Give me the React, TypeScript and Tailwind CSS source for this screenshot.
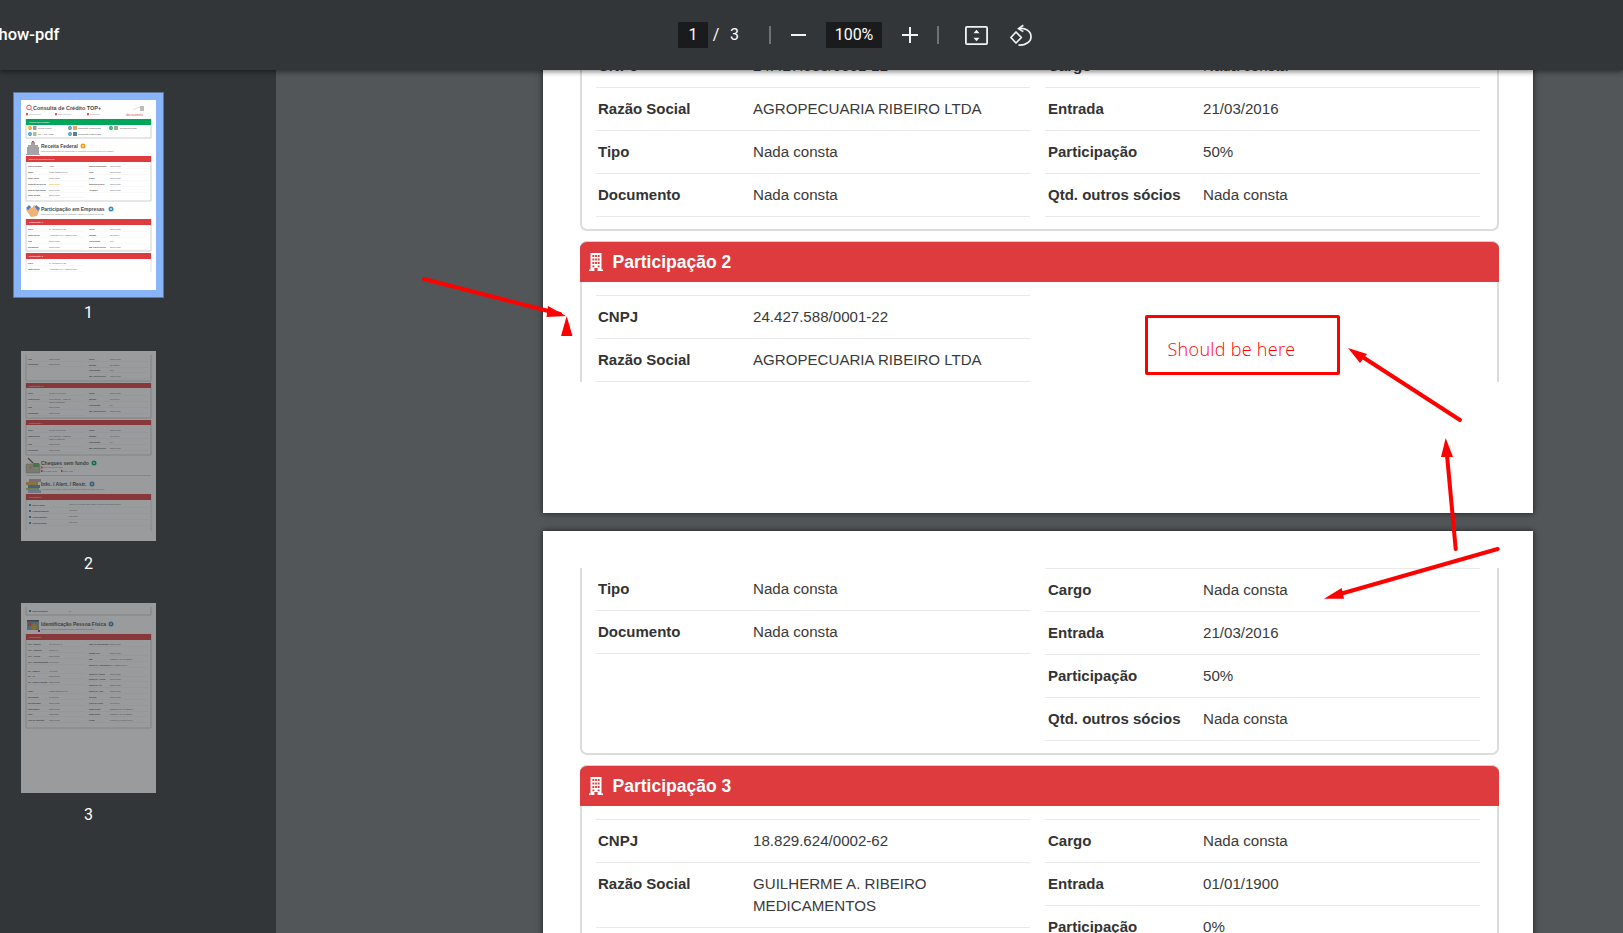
import React from "react";

const LABEL = "#444";
function T({ x, y, s = 2, c = "#555", b = false, children }: { x: number; y: number; s?: number; c?: string; b?: boolean; children: React.ReactNode }) {
  return (
    <text x={x} y={y} fontSize={s} fill={c} fontWeight={b ? 700 : 400} fontFamily="'Liberation Sans', sans-serif">
      {children}
    </text>
  );
}
function Dot({ x, y, c, r = 1.9 }: { x: number; y: number; c: string; r?: number }) {
  return (
    <g>
      <circle cx={x} cy={y} r={r} fill={c} />
      <circle cx={x} cy={y} r={r * 0.4} fill="#fff" opacity={0.75} />
    </g>
  );
}
function RedBar({ y, t, h = 6 }: { y: number; t: string; h?: number }) {
  return (
    <g>
      <rect x={5} y={y} width={125} height={h} fill="#dd3b3e" />
      <T x={8} y={y + 4} s={2.2} c="#fff">{t}</T>
    </g>
  );
}
function Frame({ y1, y2, open = false }: { y1: number; y2: number; open?: boolean }) {
  return open ? (
    <path d={`M5 ${y1}V${y2}M130 ${y1}V${y2}`} stroke="#ccc" strokeWidth={0.6} fill="none" />
  ) : (
    <path d={`M5 ${y1}V${y2}H130V${y1}`} stroke="#c8c8c8" strokeWidth={0.9} fill="none" />
  );
}
function Cell({ side, y, l, v, vc }: { side: "l" | "r"; y: number; l: string; v: string; vc?: string }) {
  const lx = side === "l" ? 7 : 68;
  const vx = side === "l" ? 28 : 89;
  const w = side === "l" ? 58 : 60;
  return (
    <g>
      <T x={lx} y={y + 0.7} s={1.9} c={LABEL} b>{l}</T>
      <T x={vx} y={y + 0.7} s={1.9} c={vc ?? "#666"}>{v}</T>
      <rect x={lx - 1} y={y + 2.4} width={w} height={0.3} fill="#e6e6e6" />
    </g>
  );
}
function Heading({ y, t, sub, dx, c, s = 5 }: { y: number; t: string; sub: string; dx: number; c: string; s?: number }) {
  return (
    <g>
      <T x={20} y={y + 1.8} s={s} c="#4a4a4a" b>{t}</T>
      <Dot x={dx} y={y} c={c} r={2.5} />
      <T x={20} y={y + 6} s={1.9} c="#777">{sub}</T>
    </g>
  );
}
const N = "Nada consta";

function Thumb1() {
  return (
    <svg viewBox="0 0 135 190" className="w-[135px] h-[190px] block">
      <circle cx={8} cy={7.5} r={2.3} fill="none" stroke="#e8574e" strokeWidth={1} />
      <path d="M9.8 9.3L11.5 11" stroke="#e8574e" strokeWidth={1} />
      <T x={12} y={9.8} s={5.5} c="#4a4a4a" b>Consulta de Crédito TOP+</T>
      <path d="M112 10l6-3 3 1" stroke="#e6a0a0" strokeWidth={0.5} fill="none" />
      <rect x={119} y={6} width={4} height={5} fill="#bbb" />
      <T x={105} y={15.6} s={3.2} c="#e04a50">docscamelo</T>
      <rect x={5} y={13} width={2} height={2.4} fill="#e8574e" />
      <T x={8} y={15} s={1.7} c="#888">000.000.000-00</T>
      <rect x={34} y={13} width={2} height={2.4} fill="#e8574e" />
      <T x={37} y={15} s={1.7} c="#888">Data: 00/00/0000</T>
      <rect x={66} y={13} width={2} height={2.4} fill="#e8574e" />
      <T x={69} y={15} s={1.7} c="#888">ID 00000000</T>

      <Frame y1={19} y2={38} />
      <rect x={5} y={19} width={125} height={6} fill="#00a65a" />
      <T x={8} y={23} s={2} c="#fff">Resumo das consultas</T>
      <Dot x={9} y={28} c="#f39c12" />
      <rect x={12} y={26} width={3.5} height={4} fill="#999" />
      <T x={17} y={28.7} s={1.9} c={LABEL}>Receita Federal</T>
      <Dot x={49} y={28} c="#3c8dbc" />
      <rect x={52} y={26} width={4} height={4} fill="#e9a36b" />
      <T x={57} y={28.7} s={1.9} c={LABEL}>Participação em Empresas</T>
      <Dot x={90} y={28} c="#00a65a" />
      <rect x={93} y={26} width={4} height={4} fill="#a8a890" />
      <T x={99} y={28.7} s={1.9} c={LABEL}>Cheques sem fundo</T>
      <Dot x={9} y={34} c="#3c8dbc" />
      <rect x={12} y={32} width={3.5} height={4} fill="#a9c48a" />
      <T x={17} y={34.7} s={1.9} c={LABEL}>Info. / Alert. / Restr.</T>
      <Dot x={49} y={34} c="#3c8dbc" />
      <rect x={52} y={32} width={4} height={4} fill="#5d7f94" />
      <T x={57} y={34.7} s={1.9} c={LABEL}>Identificação Pessoa Física</T>

      <path d="M5 54h14v1H5zM6 47h12v7H6zM7 45h10v2H7zM10 42h4v3h-4z" fill="#a3a3a8" />
      <rect x={11} y={41} width={2} height={1.5} fill="#d9534f" />
      <Heading y={46} t="Receita Federal" sub="Saiba mais informações do nome/destino e a situação dele/dela segundo seu cadastro" dx={62} c="#f39c12" />

      <Frame y1={56} y2={101} />
      <RedBar y={56} t="Dados da Receita Federal" />
      <Cell side="l" y={66} l="Tipo de pessoa" v="FÍSICA" />
      <Cell side="l" y={72} l="Nome" v="ROSE RIBEIRO DIAS" />
      <Cell side="l" y={78} l="Nome social" v={N} />
      <Cell side="l" y={84} l="Situação na Receita" v={N} vc="#f39c12" />
      <Cell side="l" y={90} l="Data de nascimento" v={N} />
      <Cell side="l" y={95} l="Nome da mãe" v={N} />
      <Cell side="r" y={66} l="Data de atualização" v={N} />
      <Cell side="r" y={72} l="Sexo" v={N} />
      <Cell side="r" y={78} l="E-mail" v={N} />
      <Cell side="r" y={84} l="Natureza jurídica" v={N} />
      <Cell side="r" y={90} l="Atividade" v={N} />

      <path d="M5 110l4-4 2 2 2-3 6 4-3 7-6 1z" fill="#eeb27a" />
      <path d="M5 108l3-3 2 2-3 3zM15 105l4 3-2 3-3-4z" fill="#4a80c0" />
      <Heading y={109} t="Participação em Empresas" sub="Seus parceiros, participação de empresas, obtidos no Ministério do Crédito" dx={90} c="#3c8dbc" />

      <Frame y1={119} y2={151} />
      <RedBar y={119} t="Participação 1" />
      <Cell side="l" y={129} l="CNPJ" v="24.427.588/0001-22" />
      <Cell side="l" y={135} l="Razão Social" v="AGROPECUARIA RIBEIRO LTDA" />
      <Cell side="l" y={141} l="Tipo" v={N} />
      <Cell side="l" y={147} l="Documento" v={N} />
      <Cell side="r" y={129} l="Cargo" v={N} />
      <Cell side="r" y={135} l="Entrada" v="21/03/2016" />
      <Cell side="r" y={141} l="Participação" v="50%" />
      <Cell side="r" y={147} l="Qtd. outros sócios" v={N} />

      <Frame y1={153} y2={172} open />
      <RedBar y={153} t="Participação 2" />
      <Cell side="l" y={163} l="CNPJ" v="24.427.588/0001-22" />
      <Cell side="l" y={169} l="Razão Social" v="AGROPECUARIA RIBEIRO LTDA" />
    </svg>
  );
}

function Thumb2() {
  return (
    <svg viewBox="0 0 135 190" className="w-[135px] h-[190px] block">
      <Frame y1={4} y2={30} />
      <Cell side="l" y={8} l="Tipo" v={N} />
      <Cell side="l" y={13} l="Documento" v={N} />
      <Cell side="r" y={8} l="Cargo" v={N} />
      <Cell side="r" y={14} l="Entrada" v="21/03/2016" />
      <Cell side="r" y={19} l="Participação" v="50%" />
      <Cell side="r" y={25} l="Qtd. outros sócios" v={N} />

      <Frame y1={32} y2={67} />
      <RedBar y={32} t="Participação 3" h={5} />
      <Cell side="l" y={42} l="CNPJ" v="18.829.624/0002-62" />
      <Cell side="l" y={48} l="Razão Social" v="GUILHERME A. RIBEIRO" />
      <T x={28} y={51.7} s={1.9} c="#666">MEDICAMENTOS</T>
      <Cell side="l" y={56} l="Tipo" v={N} />
      <Cell side="l" y={62} l="Documento" v={N} />
      <Cell side="r" y={42} l="Cargo" v={N} />
      <Cell side="r" y={48} l="Entrada" v="01/01/1900" />
      <Cell side="r" y={54} l="Participação" v="0%" />
      <Cell side="r" y={60} l="Qtd. outros sócios" v={N} />

      <Frame y1={69} y2={104} />
      <RedBar y={69} t="Participação 4" h={5} />
      <Cell side="l" y={79} l="CNPJ" v="18.829.624/0001-81" />
      <Cell side="l" y={85} l="Razão Social" v="GUILHERME A. RIBEIRO" />
      <T x={28} y={88.7} s={1.9} c="#666">MEDICAMENTOS</T>
      <Cell side="l" y={93} l="Tipo" v={N} />
      <Cell side="l" y={99} l="Documento" v={N} />
      <Cell side="r" y={79} l="Cargo" v={N} />
      <Cell side="r" y={85} l="Entrada" v="01/01/1900" />
      <Cell side="r" y={91} l="Participação" v="0%" />
      <Cell side="r" y={97} l="Qtd. outros sócios" v={N} />

      <rect x={5} y={113} width={14} height={9} rx={1} fill="#bdbdb0" stroke="#777" strokeWidth={0.4} />
      <rect x={12} y={112} width={6} height={4} fill="#6fae5a" />
      <rect x={8} y={115} width={2.5} height={3} fill="#e0a040" />
      <path d="M7 107l5 5" stroke="#555" strokeWidth={1.2} />
      <T x={20} y={113.8} s={5} c="#4a4a4a" b>Cheques sem fundo</T>
      <Dot x={73} y={112} c="#00a65a" r={2.5} />
      <rect x={20} y={115.5} width={1.6} height={2} fill="#d9534f" />
      <T x={22} y={117.4} s={1.7} c="#777">Ocorrências: Nada consta</T>
      <rect x={20} y={119} width={1.6} height={2} fill="#d9534f" />
      <T x={22} y={120.8} s={1.7} c="#777">Doc.: Nada consta</T>
      <rect x={40} y={119} width={1.6} height={2} fill="#d9534f" />
      <T x={42} y={120.8} s={1.7} c="#777">Banco: Nada</T>
      <rect x={5} y={124} width={125} height={0.5} fill="#aaa" />

      <rect x={8} y={128} width={12} height={3} fill="#c9a2b0" />
      <rect x={5} y={131} width={12} height={3} fill="#e0b040" />
      <rect x={7} y={134} width={12} height={3} fill="#5e8fc0" />
      <rect x={5} y={137} width={13} height={2} fill="#a8c878" />
      <rect x={7} y={139} width={13} height={3} fill="#a8c0d8" />
      <Heading y={133} t="Info. / Alert. / Restr." sub="Veja outras informações, avisos, alertas para pessoas com base nos dados" dx={71} c="#3c8dbc" />

      <Frame y1={143} y2={180} open />
      <RedBar y={143} t="Informações" />
      {[
        [154, "Fonte de Dados", "COMPARAÇÃO COM OS DADOS CADASTRAIS DO DOCUMENTO"],
        [160, "Alertas Documentos", "00/00/0000"],
        [166, "Alertas Cadastrais", "00/00/0000"],
        [172, "Alertas Identidade", "00/00/0000"],
      ].map(([y, l, v]) => (
        <g key={String(y)}>
          <rect x={8} y={Number(y) - 1} width={2} height={2} fill="#3c8dbc" />
          <T x={11} y={Number(y) + 0.7} s={1.7} c={LABEL} b>{l}</T>
          <T x={48} y={Number(y) + 0.2} s={1.7} c="#666">{v}</T>
          <rect x={7} y={Number(y) + 2.6} width={121} height={0.3} fill="#e6e6e6" />
        </g>
      ))}
    </svg>
  );
}

function Thumb3() {
  const left: [number, string, string][] = [
    [41, "CPF - Número", "000.000.000-00"],
    [47, "CPF - Situação", "REGULAR"],
    [53, "CPF - Origem", N],
    [59, "CPF - Data atualização", "00/00/0000"],
    [68, "RG - Número", "00000000"],
    [73, "RG - UF", N],
    [79, "RG - Data de emissão", N],
    [88, "Nome", "ROSE RIBEIRO DIAS"],
    [94, "Nascimento", "17/03/1982"],
    [100, "Nacionalidade", N],
    [106, "Naturalidade", N],
    [111, "Sexo", "FEMININO"],
    [117, "Grau de instrução", N],
  ];
  const right: [number, string, string][] = [
    [41, "Núm. de dependentes", N],
    [50, "Estado Civil", N],
    [56, "Mãe", "ROSELITA DIAS RIBEIRO"],
    [62, "Endereço - Logradouro", "RUA RIBEIRO DIAS"],
    [71, "Endereço - Bairro", N],
    [76, "Endereço - Cidade", N],
    [82, "Endereço - UF", N],
    [88, "Endereço - CEP", N],
    [94, "Telefone", N],
    [100, "Título de eleitor", "000000000"],
    [106, "Nome do pai", "ROBERTO DIAS RIBEIRO"],
    [111, "Nome social", "ROSELITA DIAS RIBEIRO"],
    [117, "E-mail", "exemplo@exemplo.com.br"],
  ];
  return (
    <svg viewBox="0 0 135 190" className="w-[135px] h-[190px] block">
      <Frame y1={4} y2={12} />
      <rect x={8} y={7} width={2} height={2} fill="#3c8dbc" />
      <T x={11} y={8.7} s={1.7} c={LABEL} b>Outras Informações</T>
      <T x={48} y={8.7} s={1.7} c="#666">00</T>

      <rect x={6} y={17} width={12} height={10} fill="#7a9ab0" />
      <rect x={6} y={17} width={12} height={1.5} fill="#456" />
      <rect x={7} y={19.5} width={3.5} height={3.5} fill="#d9534f" />
      <circle cx={13} cy={24} r={3} fill="#d9a62e" />
      <rect x={17} y={27} width={2} height={2} fill="#c2185b" />
      <Heading y={21} t="Identificação Pessoa Física" sub="Saiba mais todas as informações sobre a identidade da pessoa" dx={90} c="#3c8dbc" />

      <Frame y1={31} y2={125} />
      <RedBar y={31} t="Identificação" />
      {left.map(([y, l, v]) => (
        <Cell key={y} side="l" y={y} l={l} v={v} />
      ))}
      {right.map(([y, l, v]) => (
        <Cell key={y} side="r" y={y} l={l} v={v} />
      ))}
    </svg>
  );
}

function Thumbnail({ n, active, children }: { n: number; active?: boolean; children: React.ReactNode }) {
  return (
    <div className={n === 1 ? "h-[251px] pl-[21px]" : "h-[252px] pl-[21px]"}>
      <div className={active ? "w-[135px] h-[190px] bg-white shadow-[0_0_0_7px_#8ab4f8,0_0_0_8px_#5f7899]" : "w-[135px] h-[190px] bg-white opacity-50"}>
        {children}
      </div>
      <div className={n === 3 ? "w-[135px] mt-[13px] text-center text-white text-[16px] leading-[18px]" : "w-[135px] mt-[14px] text-center text-white text-[16px] leading-[18px]"}>{n}</div>
    </div>
  );
}

function Row({ l, v, first, right }: { l: string; v: React.ReactNode; first?: boolean; right?: boolean }) {
  return (
    <div className={`flex py-[10px] border-b border-[#e9e9e9] ${first ? "border-t" : ""} ${right ? "pl-[3px]" : "pl-[2px]"}`}>
      <div className="w-[155px] shrink-0 font-bold text-[15px] text-[#333]">{l}</div>
      <div className="flex-1 text-[#3a3a3a]">{v}</div>
    </div>
  );
}

function Grid({ left, right }: { left: React.ReactNode; right?: React.ReactNode }) {
  return (
    <div className="flex pl-[14px] pr-[16px]">
      <div className="w-[434px] shrink-0">{left}</div>
      <div className="w-[435px] ml-[15px] shrink-0">{right}</div>
    </div>
  );
}

function RedHeader({ n }: { n: number }) {
  return (
    <div className="h-[41px] -mx-[2px] mb-[13px] flex items-center pl-[9px] bg-[#dd3b3e] border-t border-[#d2d2d2] rounded-t-[7px] text-white font-bold text-[17.5px]">
      <svg viewBox="0 0 14 18" className="w-[14px] h-[18px]" fill="#fff">
        <path fillRule="evenodd" d="M1.5 0h11v16.5H14V18H8.6v-3H5.4v3H0v-1.5h1.5zM3.4 2v2h1.9V2zM6.1 2v2h1.8V2zM8.7 2v2h1.9V2zM3.4 5.5v2h1.9v-2zM6.1 5.5v2h1.8v-2zM8.7 5.5v2h1.9v-2zM3.4 9v2h1.9V9zM6.1 9v2h1.8V9zM8.7 9v2h1.9V9zM3.4 12.5v1.8h1.9v-1.8zM8.7 12.5v1.8h1.9v-1.8z" />
      </svg>
      <span className="ml-[9.5px]">Participação {n}</span>
    </div>
  );
}

function Card({ children, closedBottom = true, top = false, className = "" }: { children: React.ReactNode; closedBottom?: boolean; top?: boolean; className?: string }) {
  return (
    <div className={`border-x-2 border-[#dcdcdc] ${closedBottom ? "border-b-2 rounded-b-[7px] pb-[12px]" : ""} ${top ? "rounded-t-[7px]" : ""} ${className}`}>
      {children}
    </div>
  );
}

export default function App() {
  return (
    <div className="relative h-screen w-full overflow-hidden flex flex-col bg-[#323639] font-['Roboto',sans-serif]">
      <header className="relative z-10 h-[70px] shrink-0 flex items-center bg-[#323639] text-white text-[16px] shadow-[0_2px_5px_rgba(0,0,0,0.45)]">
        <div className="w-[678px] shrink-0 overflow-hidden whitespace-nowrap pt-[1px]">
          <span className="block -ml-[10px] font-medium text-[16.5px]">show-pdf</span>
        </div>
        <div className="w-[30px] h-[26px] bg-[#191b1c] flex items-center justify-center">1</div>
        <span className="ml-[4px] w-[8px] text-center">/</span>
        <span className="ml-[10px] w-[8px] text-center">3</span>
        <div className="ml-[31px] w-[2px] h-[18px] bg-[#6f7376]" />
        <svg viewBox="0 0 15 2" className="ml-[20px] w-[15px] h-[2px]"><rect width="15" height="2" fill="#f1f3f4" /></svg>
        <div className="ml-[20px] w-[56px] h-[26px] bg-[#191b1c] flex items-center justify-center">100%</div>
        <svg viewBox="0 0 16 16" className="ml-[20px] w-[16px] h-[16px]"><path d="M7 0h2v7h7v2H9v7H7V9H0V7h7z" fill="#f1f3f4" /></svg>
        <div className="ml-[19px] w-[2px] h-[18px] bg-[#6f7376]" />
        <svg viewBox="0 0 23 19" className="ml-[26px] w-[23px] h-[19px]">
          <rect x="0.9" y="0.9" width="21.2" height="17.2" rx="1" fill="none" stroke="#f1f3f4" strokeWidth="1.8" />
          <path d="M11.5 3.8l3 3.4h-6zM11.5 15.2l-3-3.4h6z" fill="#f1f3f4" />
        </svg>
        <svg viewBox="0 0 22 24" className="ml-[22px] w-[22px] h-[24px]" fill="none" stroke="#f1f3f4" strokeWidth="1.7">
          <path d="M0.9 14.5L6 9l5.4 5.5L6 20z" strokeLinejoin="round" />
          <path d="M9 5.6C15.5 4.6 21 8 21 13.7c0 5.2-5.6 9-12.6 8.3" />
          <path d="M13.3 2.2L8.6 5.6l4.7 3" />
        </svg>
      </header>

      <div className="flex-1 min-h-0 flex">
        <aside className="w-[276px] shrink-0 pt-[30px] bg-[#323639] overflow-hidden">
          <Thumbnail n={1} active><Thumb1 /></Thumbnail>
          <Thumbnail n={2}><Thumb2 /></Thumbnail>
          <Thumbnail n={3}><Thumb3 /></Thumbnail>
        </aside>

        <main className="flex-1 min-w-0 bg-[#525659] overflow-hidden pl-[267px] font-['Liberation_Sans',Arial,sans-serif] text-[15.1px] leading-[22px]">
          <section className="w-[990px] h-[473px] -mt-[30px] pt-[4px] pl-[37px] bg-white shadow-[0_0_6px_rgba(0,0,0,0.65)]">
            <div className="w-[919px]">
              <Card>
                <Grid
                  left={
                    <>
                      <Row first l="CNPJ" v="24.427.588/0001-22" />
                      <Row l="Razão Social" v="AGROPECUARIA RIBEIRO LTDA" />
                      <Row l="Tipo" v={N} />
                      <Row l="Documento" v={N} />
                    </>
                  }
                  right={
                    <>
                      <Row right first l="Cargo" v={N} />
                      <Row right l="Entrada" v="21/03/2016" />
                      <Row right l="Participação" v="50%" />
                      <Row right l="Qtd. outros sócios" v={N} />
                    </>
                  }
                />
              </Card>
              <Card closedBottom={false} top className="mt-[10px]">
                <RedHeader n={2} />
                <Grid
                  left={
                    <>
                      <Row first l="CNPJ" v="24.427.588/0001-22" />
                      <Row l="Razão Social" v="AGROPECUARIA RIBEIRO LTDA" />
                    </>
                  }
                />
              </Card>
            </div>
          </section>

          <section className="w-[990px] h-[500px] mt-[18px] pt-[37px] pl-[37px] bg-white shadow-[0_0_6px_rgba(0,0,0,0.65)]">
            <div className="w-[919px]">
              <Card>
                <Grid
                  left={
                    <>
                      <Row l="Tipo" v={N} />
                      <Row l="Documento" v={N} />
                    </>
                  }
                  right={
                    <>
                      <Row right first l="Cargo" v={N} />
                      <Row right l="Entrada" v="21/03/2016" />
                      <Row right l="Participação" v="50%" />
                      <Row right l="Qtd. outros sócios" v={N} />
                    </>
                  }
                />
              </Card>
              <Card closedBottom={false} top className="mt-[10px]">
                <RedHeader n={3} />
                <Grid
                  left={
                    <>
                      <Row first l="CNPJ" v="18.829.624/0002-62" />
                      <Row l="Razão Social" v={<>GUILHERME A. RIBEIRO<br />MEDICAMENTOS</>} />
                    </>
                  }
                  right={
                    <>
                      <Row right first l="Cargo" v={N} />
                      <Row right l="Entrada" v="01/01/1900" />
                      <Row right l="Participação" v="0%" />
                    </>
                  }
                />
              </Card>
            </div>
          </section>
        </main>
      </div>

      <div className="absolute left-[1144.5px] top-[315px] z-20 w-[195px] h-[60px] border-[3.5px] border-[#ff0000] rounded-[2px] pl-[20px] pt-[19px] font-['Open_Sans',sans-serif] font-light text-[18px] leading-[24px] tracking-[0.3px] text-[#ff0000]">
        Should be here
      </div>
      <svg className="absolute left-0 top-0 z-20 w-[1623px] h-[933px] pointer-events-none" viewBox="0 0 1623 933">
        <g stroke="#ff0000" strokeWidth="4" strokeLinecap="round" fill="none">
          <path d="M424 279L560 314" />
          <path d="M1460 420L1358 354" />
          <path d="M1455.7 549L1447 455" />
          <path d="M1497.7 549L1340 594" />
        </g>
        <g fill="#ff0000">
          <path d="M548 306L546.5 317L566 316z" />
          <path d="M566.7 316L561 336H572.5z" />
          <path d="M1348 348L1367 354L1360 363z" />
          <path d="M1445.7 438L1441 457L1453 457z" />
          <path d="M1324 598.7L1341.7 588L1344 598.7z" />
        </g>
      </svg>
    </div>
  );
}
